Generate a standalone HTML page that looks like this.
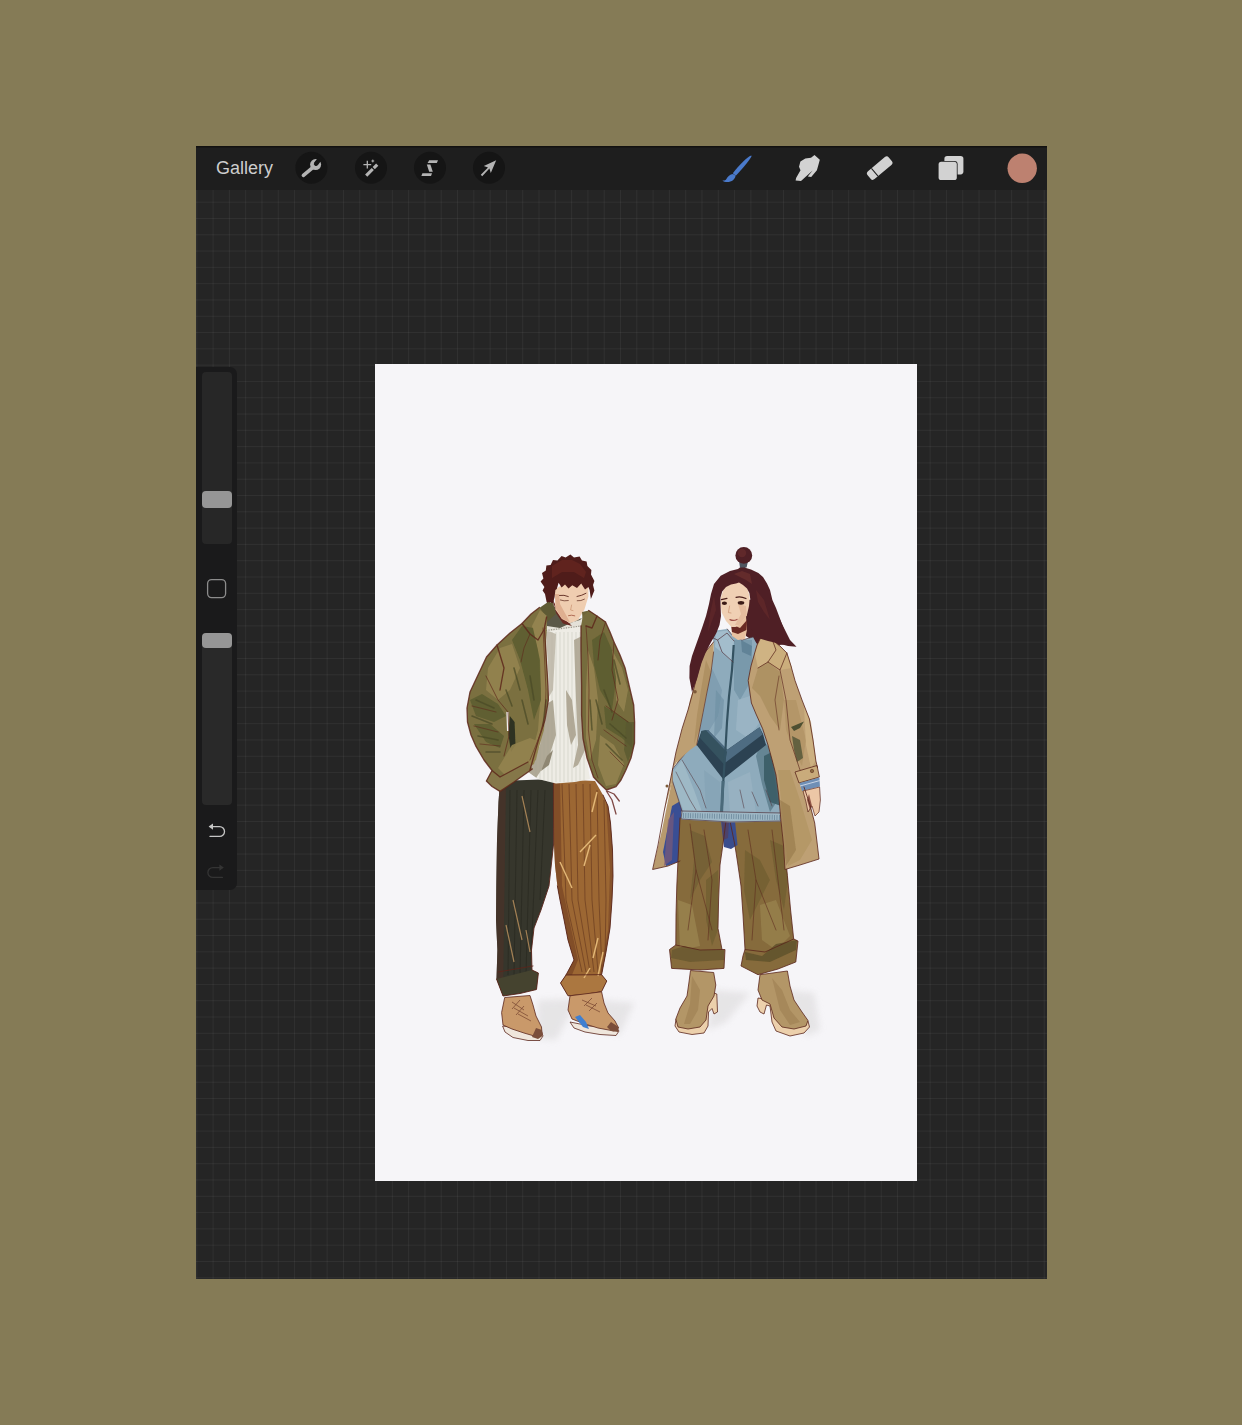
<!DOCTYPE html>
<html><head><meta charset="utf-8">
<style>
html,body{margin:0;padding:0;}
body{width:1242px;height:1425px;background:#857b56;position:relative;overflow:hidden;font-family:"Liberation Sans",sans-serif;}
#app{position:absolute;left:196px;top:146px;width:851px;height:1133px;background:#252525;overflow:hidden;}
#grid{position:absolute;left:0;top:0;width:851px;height:1133px;
 background-image:
  linear-gradient(to right, rgba(255,255,255,0.05) 0, rgba(255,255,255,0.05) 1.4px, transparent 1.4px),
  linear-gradient(to bottom, rgba(255,255,255,0.05) 0, rgba(255,255,255,0.05) 1.4px, transparent 1.4px);
 background-size:16.3px 16.3px;
 background-position:0.3px 6.8px;}
#bar{position:absolute;left:0;top:0;width:851px;height:44px;background:#1e1e1e;box-shadow:inset 0 1.5px 0 #121110;}
#gallery{position:absolute;left:20px;top:11px;font-size:18px;line-height:22px;color:#cdcdcd;}
#canvas{position:absolute;left:178.5px;top:218px;width:542.5px;height:816.7px;background:#f6f5f8;}
#side{position:absolute;left:0;top:221px;width:40.5px;height:522.5px;background:#1a1a1b;border-radius:0 7px 7px 0;}
.trk{position:absolute;left:6px;width:30px;border-radius:4px;background:#272727;}
.thumb{position:absolute;left:6px;width:30px;border-radius:4px;background:#969696;}
#svg{position:absolute;left:0;top:0;width:1242px;height:1425px;}
</style></head><body>
<div id="app">
 <div id="grid"></div>
 <div id="bar"><div id="gallery">Gallery</div></div>
 <div id="canvas"></div>
 <div id="side">
  <div class="trk" style="top:5px;height:172px;"></div>
  <div class="thumb" style="top:124px;height:17px;"></div>
  <div class="trk" style="top:265.5px;height:172px;background:#292929"></div>
  <div class="thumb" style="top:265.5px;height:15.5px;"></div>
 </div>
</div>
<svg id="svg" viewBox="0 0 1242 1425">
<defs>
<filter id="b1" x="-20%" y="-20%" width="140%" height="140%"><feGaussianBlur stdDeviation="1.2"/></filter>
<filter id="b2" x="-30%" y="-30%" width="160%" height="160%"><feGaussianBlur stdDeviation="3"/></filter>
<filter id="b05" x="-10%" y="-10%" width="120%" height="120%"><feGaussianBlur stdDeviation="0.6"/></filter>
<clipPath id="cDark"><path d="M500,781 L553.4,779 L553.6,844 L549,886 L541,910 L534,928 L531.5,950 L532,970 L538.4,973 L536.5,989.5 L520,993.5 L503,996 L496.5,979 L497.4,950 L496,920 L496.3,886 L497,840 L498.5,802 Z"/></clipPath>
<clipPath id="cBrown"><path d="M553.2,779 L595,781 L603,795 L608,806 L610.5,823 L612.5,850 L613,876 L612,900 L610,928 L606,952 L601.6,974.7 L606.8,981 L601.6,991.6 L585,994.4 L568,995.8 L560.5,983 L566,975 L574,960 L568,940 L563.7,918 L560,900 L557.4,886 L555,865 L554,844 Z"/></clipPath>
<clipPath id="cSw"><path d="M544,623 L582,618 L584,640 L586,686 L584,741 L590,779 L575,782 L556,783.4 L538,779 L525,770 L536,748 L545,722 L549,690 L547,650 Z"/></clipPath>
</defs>
<!-- toolbar icon circles -->
<g fill="#151515">
<circle cx="311.4" cy="167.7" r="16"/><circle cx="371" cy="167.7" r="16"/><circle cx="430" cy="167.7" r="16"/><circle cx="489" cy="167.7" r="16"/>
</g>
<!-- wrench -->
<g>
<path d="M303.4,175.4 L313.6,166.8" stroke="#b4b4b4" stroke-width="3.6" stroke-linecap="round" fill="none"/>
<circle cx="315.6" cy="164.6" r="5.5" fill="#b4b4b4"/>
<g transform="translate(316.2,163.6) rotate(-52)"><rect x="-0.4" y="-2.2" width="9" height="4.4" fill="#151515"/><circle cx="-0.2" cy="0" r="2.2" fill="#151515"/></g>
</g>
<!-- wand -->
<g stroke="#b4b4b4" fill="none">
<path d="M366.2,175.6 L372.8,169" stroke-width="3.1"/>
<path d="M373.7,168.1 L377.2,164.6" stroke-width="3.1"/>
<path d="M363.4,164.7 H371.2 M367.3,160.8 V168.6" stroke-width="1.3"/>
<path d="M372.8,159.6 V162.4 M371.4,161 H374.2" stroke-width="1"/>
</g>
<!-- S selection -->
<g fill="#b4b4b4">
<path d="M429.2,160.2 H438 L436.8,162.9 H427.6 Z"/>
<path d="M426.8,164.6 H430.4 L432.8,171.8 H429.2 Z"/>
<path d="M422.4,173.2 H432 L431,175.9 H421.4 Z"/>
</g>
<!-- arrow -->
<g fill="#b4b4b4">
<path d="M496.2,160.2 L490.8,173 L489.4,168.6 L482.2,176.2 L480.8,174.8 L488,167.4 L483.8,166 Z"/>
</g>
<!-- brush -->
<g fill="#4a7acb">
<path d="M751.2,155.4 C747,157 739.6,164.4 732.8,173.2 L735.8,175.8 C743.4,167.4 750,160 751.6,156 Z"/>
<path d="M733,174 C730,174.4 727.6,176.6 726.4,179 C725.6,180.4 723.6,180.8 722.4,180.4 C724.6,182.6 730,182.6 733,180.2 C735,178.6 735.8,176.4 735.4,175.6 Z"/>
</g>
<!-- smudge finger -->
<path fill="#d2d2d2" d="M814.5,155 L819.8,159.8 L818.8,163.6 L816.9,170.2 L811.2,177 L807.8,176.6 L812.6,170.4 L801,180.9 L795.6,180.5 L796.1,178 L800.5,170.2 L799,166.8 L800.4,161.6 L805.3,158.6 L811,157.7 Z"/>
<!-- eraser -->
<g transform="translate(879.7,168.1) rotate(-40)">
<rect x="-13.8" y="-5.1" width="27.6" height="10.2" rx="2.8" fill="#d2d2d2"/>
<rect x="-7" y="-5.1" width="1" height="10.2" fill="#1e1e1e"/>
</g>
<!-- layers -->
<rect x="944.4" y="156" width="19" height="18.4" rx="2.8" fill="#d2d2d2"/>
<rect x="937.8" y="161" width="19.8" height="19.8" rx="3.2" fill="#1e1e1e"/>
<rect x="938.6" y="161.8" width="18.2" height="18.2" rx="2.6" fill="#d2d2d2"/>
<!-- color -->
<circle cx="1022.2" cy="168.3" r="14.7" fill="#bd8170"/>
<!-- sidebar square -->
<rect x="207.6" y="579.6" width="18" height="18" rx="4" fill="none" stroke="#8c8c8c" stroke-width="1.3"/>
<!-- undo -->
<g fill="none" stroke="#c6c6c6" stroke-width="1.3" stroke-linejoin="round" stroke-linecap="round">
<path d="M210,826.6 H219.6 A4.9,4.9 0 0 1 219.6,836.4 H210"/>
</g>
<path d="M208.6,826.6 L213,823.4 V829.8 Z" fill="#c6c6c6"/>
<!-- redo -->
<g fill="none" stroke="#343434" stroke-width="1.3" stroke-linejoin="round" stroke-linecap="round">
<path d="M222.4,867.6 H212.8 A4.9,4.9 0 0 0 212.8,877.4 H222.4"/>
</g>
<path d="M223.8,867.6 L219.4,864.4 V870.8 Z" fill="#343434"/>
<g style="filter:blur(0.35px)">
<!-- ground shadows -->
<g filter="url(#b2)" opacity="0.6">
<path d="M538,1000 L578,999 L556,1040 L536,1038 Z" fill="#dcdadb"/>
<path d="M600,1000 L634,1003 L620,1034 L604,1032 Z" fill="#dcdadb"/>
</g>
<!-- MAN pants -->
<g>
<path d="M500,781 L553.4,779 L553.6,844 L549,886 L541,910 L534,928 L531.5,950 L532,970 L538.4,973 L536.5,989.5 L520,993.5 L503,996 L496.5,979 L497.4,950 L496,920 L496.3,886 L497,840 L498.5,802 Z" fill="#36362c"/>
<g clip-path="url(#cDark)">
<path d="M496,781 L506,781 L503,996 L494,996 Z" fill="#4a3228" opacity="0.7"/>
<g stroke="#2a2a22" stroke-width="1" opacity="0.8" fill="none">
<path d="M510,790 L508,975 M517,790 L514,975 M524,790 L520,975 M531,790 L526,975 M538,790 L531,960 M545,790 L540,900"/>
</g>
<path d="M532,970 L538.4,973 L536.5,989.5 L503,996 L496.5,979 Z" fill="#45432f"/>
<g stroke="#b08a5a" stroke-width="1.2" fill="none" opacity="0.9">
<path d="M522,796 L530,832"/><path d="M513,900 L522,940"/><path d="M506,925 L514,962"/><path d="M526,930 L530,952"/>
</g>
</g>
<path d="M553.2,779 L595,781 L603,795 L608,806 L610.5,823 L612.5,850 L613,876 L612,900 L610,928 L606,952 L601.6,974.7 L606.8,981 L601.6,991.6 L585,994.4 L568,995.8 L560.5,983 L566,975 L574,960 L568,940 L563.7,918 L560,900 L557.4,886 L555,865 L554,844 Z" fill="#9c6733"/>
<g clip-path="url(#cBrown)">
<path d="M553,779 L560,779 L562,886 L578,960 L566,990 L556,990 L552,880 Z" fill="#7a4526" opacity="0.75"/>
<path d="M606,800 L616,800 L616,980 L600,975 L608,930 L610,870 Z" fill="#7e4a28" opacity="0.7"/>
<g stroke="#6e3f22" stroke-width="0.9" opacity="0.85" fill="none">
<path d="M562,784 L566,900 L582,972 M569,784 L572,900 L586,972 M576,784 L578,900 L590,972 M583,784 L585,900 L594,972 M590,784 L592,900 L598,972 M597,790 L599,900 L602,972 M604,800 L606,900 L605,960"/>
</g>
<path d="M566,975 L601.6,974.7 L606.8,981 L601.6,991.6 L568,995.8 L560.5,983 Z" fill="#ab7740"/>
<g stroke="#e3b877" stroke-width="1.4" fill="none">
<path d="M597,792 L592,812"/><path d="M596,835 L580,852"/><path d="M590,845 L584,866"/><path d="M560,862 L572,888"/><path d="M598,938 L593,958"/><path d="M603,952 L598,976"/><path d="M590,968 L584,978"/>
</g>
</g>
<g fill="none" stroke="#5a261c" stroke-width="1" stroke-linejoin="round" stroke-linecap="round" opacity="0.9">
<path d="M553.4,779 L553.6,844 L549,886 L541,910 L534,928 L531.5,950 L532,970 L538.4,973 L536.5,989.5 L520,993.5 L503,996 L496.5,979"/>
<path d="M498,972 L533,966"/>
<path d="M603,795 L608,806 L610.5,823 L612.5,850 L613,876 L612,900 L610,928 L606,952 L601.6,974.7 L606.8,981 L601.6,991.6 L585,994.4 L568,995.8 L560.5,983 L566,975 L574,960 L568,940 L563.7,918 L560,900 L557.4,886"/>
<path d="M566,975 L601.6,974.7"/>
</g>
</g>
<!-- MAN shoes -->
<g stroke="#5a261c" stroke-width="0.8" stroke-linejoin="round">
<path d="M502.6,1026 L505,1032 L513,1037.5 L528,1040.5 L540,1040.5 L543,1036 L541,1030 L520,1028 Z" fill="#efe6dc"/>
<path d="M504.7,997.5 L530,995.5 L533,1005 L536,1016 L541.5,1027 L542,1034 L536,1036.5 L524,1033 L512,1029 L503,1025 L501.6,1012.6 Z" fill="#c9996a"/>
<path d="M536,1028 L542,1030 L542.5,1036 L538,1039 L532,1037 Z" fill="#7b4e3a" stroke="none"/>
<path d="M570,1022 L574,1028 L585,1032 L600,1034.5 L616,1035.5 L619,1031 L616,1027 L590,1026 Z" fill="#efe6dc"/>
<path d="M570,995.8 L601.6,991.8 L604,1003 L608,1013 L615,1021 L618.6,1028 L614,1031 L598,1028 L585,1024 L572,1019 L568,1010 Z" fill="#c9996a"/>
<path d="M611,1022 L618.6,1027 L618,1032 L611,1031 L607,1027 Z" fill="#7b4e3a" stroke="none"/>
<path d="M575,1017 L580,1015 L586,1022 L589,1029 L583,1027 Z" fill="#3f7fd0" stroke="none"/>
</g>
<g stroke="#6b3a28" stroke-width="0.7" fill="none" opacity="0.9">
<path d="M512,1002 L524,1010 M520,1000 L512,1009 M514,1008 L528,1016 M524,1006 L516,1015 M518,1014 L531,1021"/>
<path d="M582,1000 L596,1006 M592,998 L584,1006 M586,1005 L600,1012 M597,1003 L589,1011"/>
</g>
<!-- MAN sweater -->
<path d="M544,623 L582,618 L584,640 L586,686 L584,741 L590,779 L575,782 L556,783.4 L538,779 L525,770 L536,748 L545,722 L549,690 L547,650 Z" fill="#eeece5"/>
<g clip-path="url(#cSw)">
<g stroke="#cfccc2" stroke-width="0.7" opacity="0.9">
<path d="M552,632 V782 M556,632 V782 M560,632 V782 M564,632 V782 M568,632 V782 M572,632 V782 M576,632 V782 M580,632 V782 M548,700 V782 M544,730 V782 M540,745 V782 M536,755 V782 M584,700 V782"/>
</g>
<path d="M546,630 L556,634 L553,690 L547,700 Z" fill="#b9b3a2" opacity="0.8"/>
<path d="M545,705 L553,700 L556,735 L548,760 L536,778 L528,772 L540,745 Z" fill="#a59e8a" opacity="0.85"/>
<path d="M547,756 L553,750 L549,765 L541,771 Z" fill="#8f8773"/>
<path d="M566,690 L572,700 L576,735 L571,745 L567,725 Z" fill="#aaa28e" opacity="0.9"/>
<path d="M574,640 L582,636 L586,700 L585,750 L578,765 L573,768 L578,745 L576,700 Z" fill="#a9a18d" opacity="0.85"/>
<path d="M544,622 L582,617 L581,626.5 L546.5,631.5 Z" fill="#e4e1d8"/>
<path d="M546,630.5 L581,626" stroke="#9a968a" stroke-width="1.2" stroke-dasharray="1.2 1.3" fill="none"/>
</g>
<!-- MAN neck, face, hair -->
<path d="M546,612 L556,606 L566,624 L580,620 L582,618 L560,628 L547,626 Z" fill="#5b5848"/>
<path d="M553,600 L556,613 L563,623.5 L572,626 L566,620 L558,610 Z" fill="#6a2a22"/>
<path d="M554.6,590 L555.4,609.4 L561.9,619 L570,623 L578,619.9 L584.4,609.4 L588.4,596.5 L588.4,584 L566,582 Z" fill="#efcdb0"/>
<path d="M555,594 L556,609 L562,618.6 L570,622.6 L566,615 L560,604 L559,594 Z" fill="#dba888" opacity="0.8"/>
<g stroke="#5a261c" stroke-width="0.9" fill="none" stroke-linecap="round">
<path d="M559.5,595.4 Q564,594.6 568.3,596.5"/><path d="M577,596.5 Q582,595.6 586,593.3"/>
<path d="M560.3,600 Q564,601.4 568.3,600.6" stroke="#7a4a3a"/><path d="M577.2,600.8 Q581,601.2 584.4,599.2" stroke="#7a4a3a"/>
<path d="M568.5,615.6 Q571.5,614.6 574.8,615.8" stroke="#a8604a"/>
<path d="M571.6,605 L570.6,610 L573,610.6" stroke="#c89070" stroke-width="0.7"/>
</g>
<path d="M546.6,602 L545,594 L542.6,590.6 L544.4,587 L540.6,581.6 L543.4,578.6 L542,573 L545.8,570.6 L546.4,565.6 L550.6,565 L553,560 L557.4,560.6 L561.6,556 L565.6,557.6 L570.4,554.6 L574,557.4 L579.6,556.6 L582,560.6 L586.6,561.6 L587.4,566 L591.4,570 L591,574.6 L594.4,581 L593,585 L594.4,590.6 L590.9,599 L589.6,590 L588.4,586.9 L585,589.4 L581.2,583.6 L577,588 L572.3,585.3 L568.5,588.4 L565,584.5 L561.6,587.6 L558.6,582.8 L556.8,589 L555.4,590 L554.6,597 L553.8,600 L553.4,607.6 L550.6,602 L549,606 Z" fill="#4f1c1a"/>
<path d="M552,566 L562,560 L572,560 L580,564 L586,572 L584,578 L574,572 L562,572 L552,578 Z" fill="#64261f" opacity="0.8"/>
<!-- MAN jacket -->
<!-- back of hood/collar behind neck -->
<path d="M540,607.5 L548,602 L553,603 L556,614 L547,622 L546,640 L538,632 Z" fill="#5e5a34"/>
<path d="M582,612 L589,610.6 L597,616 L606,622 L600,640 L586,640 L583,625 Z" fill="#6e6438"/>
<!-- left (viewer) arm + body panel -->
<path id="jkL" d="M539.4,607.5 L531,614 L522,623.5 L510,633 L497,645 L486.5,657 L478,675 L470,692 L467,708 L467.5,722 L471,735 L476,746.4 L484,760 L492,770.5 L486.4,781 L492,786.5 L500,791.4 L514,782 L530,770 L535,752 L539,738 L545,720 L548.4,700 L548,686 L546,655 L544.4,628 L546.6,617 Z" fill="#7b7040"/>
<!-- right arm + body panel -->
<path id="jkR" d="M588.7,610.5 L597,616 L605.5,622 L610,632 L614,642 L620,655 L625,667.7 L629,685 L633.7,705 L634.6,722 L634.5,743 L631,758 L625.7,770.5 L621,780 L616,786.6 L606.4,790 L599,783 L593.5,777 L587,758 L583,738.3 L581.6,715 L581.6,686 L581,650 L581,625.8 L583,616 Z" fill="#766c3d"/>
<!-- shading on jacket -->
<g filter="url(#b05)">
<path d="M540,610 L547,616 L546,640 L548,686 L544,730 L534,764 L528,768 L538,730 L541,690 L538,650 L532,626 Z" fill="#93834f"/>
<path d="M522,626 L533,628 L540,660 L541,700 L534,720 L528,690 L520,660 L512,640 Z" fill="#555a2c" opacity="0.75"/>
<path d="M500,648 L512,644 L520,668 L510,690 L498,700 L486,690 L488,668 Z" fill="#93834f" opacity="0.9"/>
<path d="M470,700 L482,694 L498,704 L506,716 L494,722 L476,716 Z" fill="#555a2c" opacity="0.75"/>
<path d="M474,724 L490,724 L504,736 L500,748 L486,742 Z" fill="#555a2c" opacity="0.75"/>
<path d="M509.8,716 L514.6,722 L515.5,745 L511,752 L508.5,735 Z" fill="#2f3320"/>
<path d="M506.4,712 L508.6,712 L508.8,731 L507,731 Z" fill="#f3f1f2"/>
<path d="M512,745 L530,738 L540,742 L536,760 L520,772 L508,778 L498,768 Z" fill="#93834f" opacity="0.9"/>
<path d="M492,771 L500,777 L528,762 L532.3,769 L500,791.4 L486.4,781 Z" fill="#85774a"/>
<path d="M592,640 L604,632 L612,650 L616,680 L612,710 L600,690 L594,665 Z" fill="#555a2c" opacity="0.75"/>
<path d="M588,650 L594,668 L598,700 L596,740 L590,760 L586,738 L586,690 Z" fill="#93834f" opacity="0.95"/>
<path d="M612,650 L622,668 L628,690 L624,712 L616,700 L616,676 Z" fill="#93834f" opacity="0.9"/>
<path d="M604,706 L620,716 L632,724 L632,748 L622,738 L606,728 Z" fill="#555a2c" opacity="0.75"/>
<path d="M600,735 L614,745 L624,764 L616,784 L606,786 L598,765 Z" fill="#93834f" opacity="0.9"/>
<path d="M626,722 L634,722 L634,745 L628,762 L624,750 Z" fill="#5a5a30" opacity="0.8"/>
</g>
<g stroke="#4a4a26" stroke-width="1.6" fill="none" stroke-linecap="round" opacity="0.7" filter="url(#b05)">
<path d="M476,700 L494,708 M472,716 L492,724 M478,736 L498,740 M486,752 L500,752"/>
<path d="M514,668 L520,690 M506,690 L512,706 M522,700 L528,724 M530,676 L534,700"/>
<path d="M604,690 L612,712 M596,700 L602,724 M610,724 L626,738 M606,744 L622,760 M614,660 L620,684"/>
<path d="M590,700 L592,730 M546,700 L543,726"/>
</g>
<!-- jacket outlines -->
<g fill="none" stroke="#5e281c" stroke-width="1.35" stroke-linejoin="round" stroke-linecap="round" opacity="0.85">
<path d="M539.4,607.5 L531,614 L522,623.5 L510,633 L497,645 L486.5,657 L478,675 L470,692 L467,708 L467.5,722 L471,735 L476,746.4 L484,760 L492,770.5 L486.4,781 L492,786.5 L500,791.4 L514,782 L532.3,769"/>
<path d="M492,770.5 L500,777 L528,762"/>
<path d="M546.6,617 L544.4,628 L546,655 L548,686 L548.4,700 L545,720 L539,738 L535,752 L530,770"/>
<path d="M543,628 L544.6,660 L546,690 L545,715 L540,735 L530,760" stroke-width="0.7"/>
<path d="M522,623.5 L530,634 L538,640 L545,628"/>
<path d="M530,634 L524,648 L521,662" stroke-width="0.7"/>
<path d="M497,645 L504,668 L500,690"/>
<path d="M486,676 L498,700 L508,712 L509,736 L504,756" stroke-width="0.8"/>
<path d="M472,706 L496,712 M474,726 L498,732 M480,744 L500,746" stroke-width="0.7"/>
<path d="M588.7,610.5 L597,616 L605.5,622 L610,632 L614,642 L620,655 L625,667.7 L629,685 L633.7,705 L634.6,722 L634.5,743 L631,758 L625.7,770.5 L621,780 L616,786.6 L606.4,790 L599,783 L593.5,777 L587,758 L583,738.3 L581.6,715 L581.6,686 L581,650 L581,625.8"/>
<path d="M586,626 L588,655 L589,690 L588.4,730 L592,760 L598,778" stroke-width="0.7"/>
<path d="M597,616 L592,628 L586,626"/>
<path d="M605.5,622 L600,640 L598,660" stroke-width="0.8"/>
<path d="M614,642 L612,670 L618,700 L612,720" stroke-width="0.8"/>
<path d="M606,706 L628,722 M604,730 L626,746 M610,752 L624,766" stroke-width="0.7"/>
<path d="M606.4,791 L612,800 L616,814 M607,791 L614,794 L619.3,801" stroke="#6a2a26" stroke-width="1.3"/>
</g>
<!-- WOMAN ground shadows -->
<g filter="url(#b2)" opacity="0.6">
<path d="M714,990 L750,993 L726,1022 L708,1030 Z" fill="#dcdadb"/>
<path d="M786,990 L814,993 L820,1030 L806,1036 Z" fill="#dcdadb"/>
</g>
<!-- hair back -->
<path d="M746,600 L770,598 L782,624 L790,644 L768,646 L758,645 L752,640 L746,636 Z" fill="#4f1f25"/>
<!-- coat back/inner + lining -->
<path d="M713,644 L700,668 L690,700 L683,740 L672,781 L662,830 L652.6,869.5 L668,866 L680,861 L682,812 L690,770 L700,704 Z" fill="#b89a6e"/>
<path d="M672,806 L682,800 L681,861 L666,866 L663,852 Z" fill="#394e94"/>
<path d="M668,820 L674,812 L672,860 L664,866 Z" fill="#7a5a78" opacity="0.7"/>
<!-- WOMAN pants -->
<path id="wpL" d="M680,818 L726,821 L723,844 L720,865 L718.6,900 L718,928.4 L722,949.5 L725,949.5 L724,968.4 L700,970 L671.6,968.4 L669.5,949.5 L675.8,945 L676,915 L676.8,886 L678,860 L679,840 Z" fill="#866b3c"/>
<path id="wpR" d="M730,821 L783,819 L785,850 L787.4,875.8 L790.6,910 L793.7,939 L798,941 L795.8,962 L778,969 L758,974.7 L741,966 L743,955.8 L745,949.5 L743,915 L741,886 L737.5,862 L734.7,844 Z" fill="#866b3c"/>
<path d="M721,821 L735,821 L737.5,845 L731,849 L724,847 Z" fill="#3a4e8e"/><path d="M722,821 L729,821 L728,838 L723,840 Z" fill="#5a3a50" opacity="0.6"/>
<g filter="url(#b05)">
<path d="M690,830 L705,836 L712,862 L700,880 L690,900 L694,860 Z" fill="#6d5c30" opacity="0.6"/>
<path d="M706,880 L718,870 L718,930 L712,946 L706,920 Z" fill="#6a5a2e" opacity="0.6"/>
<path d="M678,900 L692,905 L700,946 L680,950 Z" fill="#9a8450" opacity="0.8"/>
<path d="M672,950 L684,946 L700,950 L724,950 L724,960 L690,962 L671,958 Z" fill="#6b5a30" opacity="0.9"/>
<path d="M745,850 L760,860 L770,880 L760,900 L750,920 L744,890 Z" fill="#6c5b2f" opacity="0.6"/>
<path d="M770,840 L784,846 L788,880 L784,910 L776,880 Z" fill="#6a5a2e" opacity="0.6"/>
<path d="M760,905 L776,900 L790,936 L776,950 L762,940 Z" fill="#9a8450" opacity="0.7"/>
<path d="M776,944 L797,940 L796,950 L770,962 L746,960 L745,952 L762,956 Z" fill="#63532b" opacity="0.9"/>
</g>
<g fill="none" stroke="#5a261c" stroke-width="0.9" stroke-linejoin="round" stroke-linecap="round" opacity="0.9">
<path d="M680,818 L679,840 L678,860 L676.8,886 L676,915 L675.8,945 L669.5,949.5 L671.6,968.4 L700,970 L724,968.4 L725,949.5 L722,949.5 L718,928.4 L718.6,900 L720,865 L723,844 L726,821"/>
<path d="M675.8,945 L700,950 L722,949.5"/>
<path d="M730,821 L734.7,844 L737.5,862 L741,886 L743,915 L745,949.5 L743,955.8 L741,966 L758,974.7 L778,969 L795.8,962 L798,941 L793.7,939 L790.6,910 L787.4,875.8 L785,850 L783,819"/>
<path d="M745,949.5 L765,952 L793.7,939"/>
<path d="M690,824 L696,870 L688,930 M704,830 L712,880 L708,940 M696,870 L712,930" stroke-width="0.6"/>
<path d="M748,830 L756,880 L752,940 M772,830 L778,880 L784,930 M756,880 L776,930" stroke-width="0.6"/>
</g>
<!-- boots -->
<g stroke="#5a261c" stroke-width="0.8" stroke-linejoin="round">
<path d="M676,1019 L675,1026 L679,1032 L692,1034.5 L704,1033 L708,1026 L708.5,1012 L712,1008.5 L714,1014 L717.5,1012 L716.8,994 L711,992 L700,1010 Z" fill="#ecd0ac"/>
<path d="M690.5,970.5 L713.7,972.5 L715.8,985 L714,996 L708,1006 L706,1020 L700,1027 L688,1029 L678,1027 L675.8,1019 L680,1008 L687,996 L689,982 Z" fill="#b39667"/>
<path d="M758,998 L757,1006 L760,1012 L764,1014 L766.5,1005 L770,1006 L772,1022 L776,1031 L790,1036 L804,1033 L809.5,1027 L808,1021 L790,1020 L770,1000 Z" fill="#ecd0ac"/>
<path d="M760,974.7 L787.4,971 L790,986 L794,1000 L802,1012 L808,1020.5 L806,1026 L794,1029 L782,1027 L774,1018 L770,1004 L762,1000 L758,990 Z" fill="#b39667"/>
</g>
<path d="M692,976 L700,990 L698,1010 L690,1024 L684,1024 L690,1004 Z" fill="#9c7f52" opacity="0.6"/>
<path d="M772,978 L782,990 L790,1010 L800,1022 L790,1025 L780,1010 Z" fill="#9c7f52" opacity="0.6"/>
<!-- hoodie -->
<path id="hood" d="M716,630.6 L727.3,629 L733,636 L742,640 L753,637 L760,650 L758,690 L762,722 L770,745 L776,780 L781,812 L781,821 L730,822 L681,819 L682,811 L672.5,781 L672.5,769 L679,761 L690,748 L697,730 L701,710 L706,690 L711,668 L713.6,649 L713,638 Z" fill="#8eabbc"/>
<g filter="url(#b05)">
<path d="M716,632 L727,630.4 L734,640 L732,662 L724,654 L715,647 Z" fill="#a3bdcc"/>
<path d="M734,640 L752,640 L752,664 L748,686 L740,700 L734,690 Z" fill="#7797aa" opacity="0.9"/>
<path d="M741,640 L752,646 L751,656 L742,652 Z" fill="#5f8296" opacity="0.9"/>
<path d="M712,668 L722,690 L718,716 L706,736 L698,728 L704,694 Z" fill="#7b9aad" opacity="0.75"/>
<path d="M716,690 L724,700 L722,728 L714,738 Z" fill="#6d8ea2" opacity="0.6"/>
<path d="M738,700 L750,696 L760,722 L748,738 L736,730 Z" fill="#9db7c6" opacity="0.8"/>
<path d="M762,740 L770,748 L778,800 L770,812 L762,784 L756,756 Z" fill="#5f8190" opacity="0.9"/>
<path d="M764,756 L772,752 L779,790 L781,806 L770,802 L764,780 Z" fill="#3c5c66" opacity="0.9"/>
<path d="M673,772 L682,760 L694,790 L702,812 L684,812 L673,782 Z" fill="#a0bac8" opacity="0.9"/>
<path d="M704,770 L720,782 L721,812 L706,812 Z" fill="#86a4b5" opacity="0.8"/>
<path d="M728,782 L750,772 L756,812 L730,814 Z" fill="#98b3c2" opacity="0.8"/>
</g>
<!-- chevron -->
<path d="M701.5,731 L708,730 L727.3,749.8 L759.5,727.2 L763,734 L766,745 L723,779 L696.7,745 Z" fill="#2c4252"/>
<path d="M704,730.4 L708,730 L727.3,749.8 L759.5,727.2 L762.5,734.4 L725.5,762.5 Z" fill="#4e6c82"/>
<path d="M701.5,731 L706,730.2 L727,752 L724.6,765 L700,738 Z" fill="#35525f"/>
<!-- zip -->
<path d="M733.7,645 L732,670 L729,696.6 L727,722 L725.7,745 L723.4,780 L721.6,812 L721,821" fill="none" stroke="#345261" stroke-width="2.2"/>
<path d="M723,781 L721.6,812 L721,821" fill="none" stroke="#4a6a7a" stroke-width="3"/>
<!-- hem -->
<path d="M681,811 L781,813 L781,821.5 L730,822.5 L681,819.5 Z" fill="#9db7c5"/>
<path d="M683,815.5 L780,817.5" stroke="#56748a" stroke-width="5" stroke-dasharray="0.8 1.6" fill="none" opacity="0.7"/>
<g fill="none" stroke="#4f3038" stroke-width="0.8" stroke-linejoin="round" stroke-linecap="round" opacity="0.85">
<path d="M697,730 L690,748 L679,761 L672.5,769 L672.5,781 L682,811 L681,819 L730,822 L781,821 L781,812"/>
<path d="M681,811 L781,813"/>
<path d="M716,630.6 L713,638 L717.6,640 L722,652 L733,662"/>
<path d="M727.3,629 L733,636 L742,640 L753,637"/>
<path d="M717.6,640 L727,633 L734,641"/>
<path d="M676,772 L690,800 L696,810 M682,760 L700,790 L706,808 M740,790 L744,808 M752,792 L758,806 M766,790 L772,806" stroke-width="0.6"/>
</g>
<!-- coat left front panel -->
<path d="M713.6,641.9 L703,654.8 L698,672 L693.5,690 L688,710 L682,728.8 L676,752 L671,777 L664,812 L672.5,781 L672.5,769 L677.4,761 L690,750 L696.7,745 L700,728 L703,712.7 L707,692 L711,672.5 L713.6,652 Z" fill="#bd9f73"/>
<path d="M706,660 L711,672 L705,700 L699,730 L694,744 L697,715 L701,690 Z" fill="#a98c5c" opacity="0.7"/>
<!-- coat right side: body + arm -->
<path id="coatR" d="M761,637 L772.4,640 L780,646 L786.9,653 L791,666 L795,680.5 L802,700 L809.4,719 L813,740 L815.9,761 L817.5,767.5 L817,784.5 L800.6,788 L804,787 L810,805 L814.7,823 L817,842 L819,859 L800,865 L785,869.5 L783.5,845 L781,821 L778.7,795 L776,775 L772.4,761 L768,745 L762.7,728.8 L756,714 L751.4,703 L748.2,680.5 L751,666 L754.7,653 L757,645 Z" fill="#bea074"/>
<g filter="url(#b05)">
<path d="M761,638 L772,641 L776,650 L768,662 L758,668 L754.7,653 Z" fill="#cfb383"/>
<path d="M772,641 L787,653 L792,668 L780,670 L768,662 L776,650 Z" fill="#cbae7c"/>
<path d="M758,668 L768,662 L780,672 L784,700 L780,730 L770,716 L760,696 L752,688 Z" fill="#a88b5c" opacity="0.7"/>
<path d="M784,700 L796,700 L806,740 L802,766 L794,752 L786,730 Z" fill="#ad9060" opacity="0.6"/>
<path d="M791,727 L804,721.5 L800,728 L794,731 Z" fill="#4d5030"/>
<path d="M792,736 L800,740 L803,758 L797,762 L794,750 Z" fill="#57573a" opacity="0.85"/>
<path d="M778,770 L790,770 L800,800 L812,840 L800,860 L788,866 L784,830 Z" fill="#b39664" opacity="0.8"/>
<path d="M780,800 L790,806 L796,850 L786,866 L783,840 Z" fill="#9a7d4f" opacity="0.7"/>
<path d="M804,706 L811,722 L816,760 L811,768 L806,745 Z" fill="#d0b484" opacity="0.8"/>
</g>
<!-- cuff, sleeve, hand -->
<path d="M795,772 L817,765.5 L819.4,777 L799,783 Z" fill="#c9ab7b" stroke="#5a261c" stroke-width="0.8"/>
<circle cx="812" cy="771" r="1.7" fill="#8a6a40" stroke="#5a261c" stroke-width="0.5"/>
<path d="M799.6,783 L819.4,777.4 L820,786.5 L802,791 Z" fill="#6f8fb6"/>
<path d="M800,786 L820,780.5" stroke="#c8d4e4" stroke-width="1" fill="none"/>
<path d="M803,791 L819.6,787 L820.4,800 L819,812 L815,816 L812,806 L808,812 L806,802 Z" fill="#ecc7a6" stroke="#5a261c" stroke-width="0.7"/>
<path d="M809,794 L812,806 L810,810 L807,800 Z" fill="#7a3a30" opacity="0.8"/>
<!-- coat outlines -->
<g fill="none" stroke="#5a261c" stroke-width="0.9" stroke-linejoin="round" stroke-linecap="round" opacity="0.9">
<path d="M713.6,641.9 L703,654.8 L698,672 L693.5,690 L688,710 L682,728.8 L676,752 L671,777 L664,812 L658,845 L652.6,869.5 L668,866 L680,861"/>
<path d="M713.6,652 L711,672.5 L707,692 L703,712.7 L700,728 L696.7,745" stroke-width="0.7"/>
<path d="M761,637 L772.4,640 L780,646 L786.9,653 L791,666 L795,680.5 L802,700 L809.4,719 L813,740 L815.9,761 L817.5,767.5"/>
<path d="M761,637 L757,645 L754.7,653 L751,666 L748.2,680.5 L751.4,703 L756,714 L762.7,728.8 L768,745 L772.4,761 L776,775 L778.7,795 L781,821 L783.5,845 L785,869.5 L800,865 L819,859 L817,842 L814.7,823 L810,805 L804,787"/>
<path d="M758,668 L768,662 L776,650 L772.4,640 M768,662 L780,670 L786.9,653" stroke-width="0.8"/>
<path d="M780,670 L786,700 L790,740 L800,770" stroke-width="0.7"/>
<path d="M779,676 L775,700 L779,730" stroke-width="0.6"/>
</g>
<circle cx="695" cy="691.8" r="1.8" fill="#7d5a3a"/><circle cx="667" cy="786" r="1.5" fill="#7d5a3a"/>
<!-- neck + face -->
<path d="M731,622 L746,616 L747,630 L745,639 L738,640 L732,636 Z" fill="#e8c0a0"/>
<path d="M731,624 L740,628 L747,620 L746.5,630 L738,634 L732,632 Z" fill="#6a2a24"/>
<path d="M731.4,581 L724,588 L720.7,598 L720.8,606 L721.7,612.5 L726,621 L731.4,627 L735.5,627 L739,625 L743.5,620 L746.8,615.4 L749,606 L749.7,598 L748,590 L744.9,585 L738,581 Z" fill="#f0d0b4"/>
<path d="M738,604 L746,606 L746.8,615.4 L739,625 L735,625 L741,614 Z" fill="#dfb494" opacity="0.7"/>
<g stroke="#4a1e1a" fill="none" stroke-linecap="round">
<ellipse cx="724.4" cy="603.2" rx="2.6" ry="1.7" fill="#3a1a16" stroke="none"/><ellipse cx="741" cy="602.8" rx="3.3" ry="1.9" fill="#3a1a16" stroke="none"/>
<path d="M721.4,599.6 L727,598.4" stroke-width="1.1"/><path d="M736,597.4 Q740.6,596 746,598.6" stroke-width="1.1"/>
<path d="M730,619.6 Q733.4,621.4 737,619.4" stroke="#a05048" stroke-width="1.2"/>
<path d="M729.6,606 L728.4,612.6 L731,613" stroke="#c89070" stroke-width="0.7"/>
</g>
<!-- hair front -->
<path d="M743,565 L738,569 L730,571 L720.7,575.7 L714,584 L711,594 L709,604 L706,616 L702,628 L697,642 L692,656 L689.6,666 L689.4,678 L692,692 L697,679 L701.5,663 L705.5,653 L710.5,643 L716.4,633 L719.5,625 L721,616 L720.6,606 L720.4,598 L722.2,591.5 L726,587 L731,584.6 L736,583.4 L739,582.6 L743,585 L747,588.6 L749.4,593 L750.4,600 L749.8,608 L748,616 L748,624 L752,630 L756,635 L759.5,638.6 L768,641 L778.8,643.5 L788,646 L796.5,646.7 L790,640 L786,632 L782,624 L779,616 L776,608 L772.4,600 L770,590 L767,583.5 L763,577 L758.4,572.9 L751,569.4 L746,568 Z" fill="#4f1f25"/>
<path d="M734,574 L742,571 L750,574 L752,584 L746,580 L740,577 Z" fill="#6c302e" opacity="0.7"/>
<path d="M756,590 L764,600 L770,620 L764,612 L758,602 Z" fill="#682c2c" opacity="0.6"/>
<path d="M714,596 L716,610 L708,632 L710,614 Z" fill="#682c2c" opacity="0.5"/>
<!-- bun -->
<path d="M739,561 L748,561 L746.6,567.5 L740,567.5 Z" fill="#4f5560"/>
<circle cx="743.8" cy="555.4" r="8.4" fill="#4f1f25"/>
<circle cx="742" cy="553" r="4.2" fill="#682c2c" opacity="0.7"/>
</g>
</svg></body></html>
